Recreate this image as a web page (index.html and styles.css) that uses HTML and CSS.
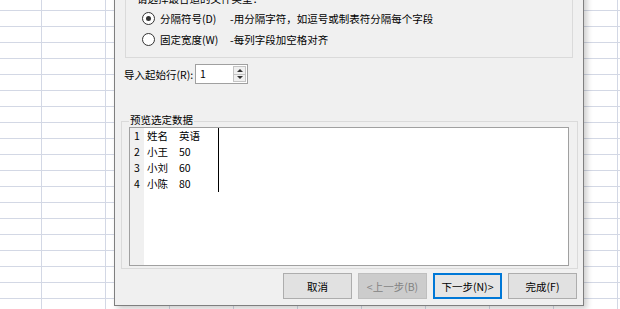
FILE: index.html
```html
<!DOCTYPE html>
<html lang="zh-CN">
<head>
<meta charset="UTF-8">
<title>文本导入向导</title>
<link rel="stylesheet" href="styles.css">
</head>
<body>
<div class="dialog">
  <div class="group type-group">
    <span class="group-title">请选择最合适的文件类型：</span>
    <div class="radio-row">
      <span class="radio checked"></span>
      <span class="radio-label">分隔符号(D)</span>
      <span>-用分隔字符，如逗号或制表符分隔每个字段</span>
    </div>
    <div class="radio-row">
      <span class="radio"></span>
      <span class="radio-label">固定宽度(W)</span>
      <span>-每列字段加空格对齐</span>
    </div>
  </div>

  <div class="start-row">
    <span class="start-label">导入起始行(R):</span>
    <div class="spin">
      <span class="spin-value">1</span>
      <div class="spin-btns">
        <span class="spin-btn"><i class="arrow-up"></i></span>
        <span class="spin-btn"><i class="arrow-down"></i></span>
      </div>
    </div>
  </div>

  <div class="group preview-group">
    <span class="group-title">预览选定数据</span>
    <div class="preview">
      <div class="line-nums">
        <div>1</div>
        <div>2</div>
        <div>3</div>
        <div>4</div>
      </div>
      <div class="preview-rows">
        <div class="preview-row"><span class="col-name">姓名</span><span>英语</span></div>
        <div class="preview-row"><span class="col-name">小王</span><span>50</span></div>
        <div class="preview-row"><span class="col-name">小刘</span><span>60</span></div>
        <div class="preview-row"><span class="col-name">小陈</span><span>80</span></div>
      </div>
    </div>
  </div>

  <div class="buttons">
    <span class="btn">取消</span>
    <span class="btn disabled">&lt;上一步(B)</span>
    <span class="btn default">下一步(N)&gt;</span>
    <span class="btn">完成(F)</span>
  </div>
</div>
</body>
</html>
```

FILE: styles.css
```css
body {
  margin: 0;
  height: 309px;
  overflow: hidden;
  font-family: "Noto Sans CJK SC", "Microsoft YaHei", sans-serif;
  font-size: 10.5px;
  color: #000;
  background-color: #fff;
  /* 表格网格线 */
  background-image:
    linear-gradient(to right, #d3d8e5 1px, transparent 1px),
    linear-gradient(to bottom, #d3d8e5 1px, transparent 1px);
  background-size: 64px 16px;
  background-position: 41px 10px;
}
.dialog {
  position: absolute;
  left: 114px;
  top: -60px;
  width: 470px;
  height: 366px;
  box-sizing: border-box;
  background: #f0f0f0;
  border: 1px solid #7f7f7f;
  box-shadow: 3px 3px 6px rgba(0, 0, 0, 0.2);
}
.group {
  position: relative;
  border: 1px solid #dadada;
}
.group-title {
  position: absolute;
  top: -9px;
  padding: 0 1px;
  line-height: 14px;
  background: #f0f0f0;
}
.type-group {
  margin: 55px 10px 0 10px;
  padding: 11px 0 7px 16px;
}
.type-group .group-title {
  left: 10px;
  top: -5px;
}
.radio-row {
  display: flex;
  align-items: center;
  height: 21px;
}
.radio {
  position: relative;
  width: 13px;
  height: 13px;
  box-sizing: border-box;
  border: 1px solid #333;
  border-radius: 50%;
  background: #fff;
  margin-right: 5px;
}
.radio.checked::after {
  content: "";
  position: absolute;
  left: 3px;
  top: 3px;
  width: 5px;
  height: 5px;
  border-radius: 50%;
  background: #333;
}
.radio-label {
  width: 70px;
}
.start-row {
  display: flex;
  align-items: center;
  height: 20px;
  margin: 6px 0 0 9px;
}
.start-label {
  width: 71px;
}
.spin {
  display: flex;
  width: 53px;
  height: 20px;
  box-sizing: border-box;
  border: 1px solid #a0a0a0;
  background: #fff;
}
.spin-value {
  flex: 1;
  padding-left: 4px;
  line-height: 18px;
}
.spin-btns {
  display: flex;
  flex-direction: column;
  width: 13px;
  margin: 1px;
  box-sizing: border-box;
  border: 1px solid #c4c4c4;
  background: #f0f0f0;
}
.spin-btn {
  flex: 1;
  display: flex;
  align-items: center;
  justify-content: center;
}
.spin-btn + .spin-btn {
  border-top: 1px solid #c4c4c4;
}
.arrow-up {
  border-left: 3px solid transparent;
  border-right: 3px solid transparent;
  border-bottom: 3px solid #333;
}
.arrow-down {
  border-left: 3px solid transparent;
  border-right: 3px solid transparent;
  border-top: 3px solid #333;
}
.preview-group {
  margin: 37px 5px 0 6px;
  padding: 5px 8px 2px 7px;
}
.preview-group .group-title {
  left: 7px;
}
.preview {
  display: flex;
  height: 139px;
  box-sizing: border-box;
  border: 1px solid #a0a0a0;
  background: #fff;
}
.line-nums {
  width: 14px;
  background: #f0f0f0;
  text-align: center;
  line-height: 16px;
}
.preview-rows {
  align-self: flex-start;
  padding-left: 3px;
  border-right: 1px solid #000;
  width: 71px;
  line-height: 16px;
}
.preview-row {
  display: flex;
}
.col-name {
  width: 32px;
}
.buttons {
  display: flex;
  justify-content: flex-end;
  gap: 6px;
  margin: 4px 6px 0 0;
}
.btn {
  display: flex;
  align-items: center;
  justify-content: center;
  width: 69px;
  height: 26px;
  box-sizing: border-box;
  border: 1px solid #adadad;
  background: #e1e1e1;
}
.btn.disabled {
  background: #cccccc;
  border-color: #bfbfbf;
  color: #838383;
}
.btn.default {
  border: 2px solid #0078d7;
  background: #e5e5e5;
}
```
